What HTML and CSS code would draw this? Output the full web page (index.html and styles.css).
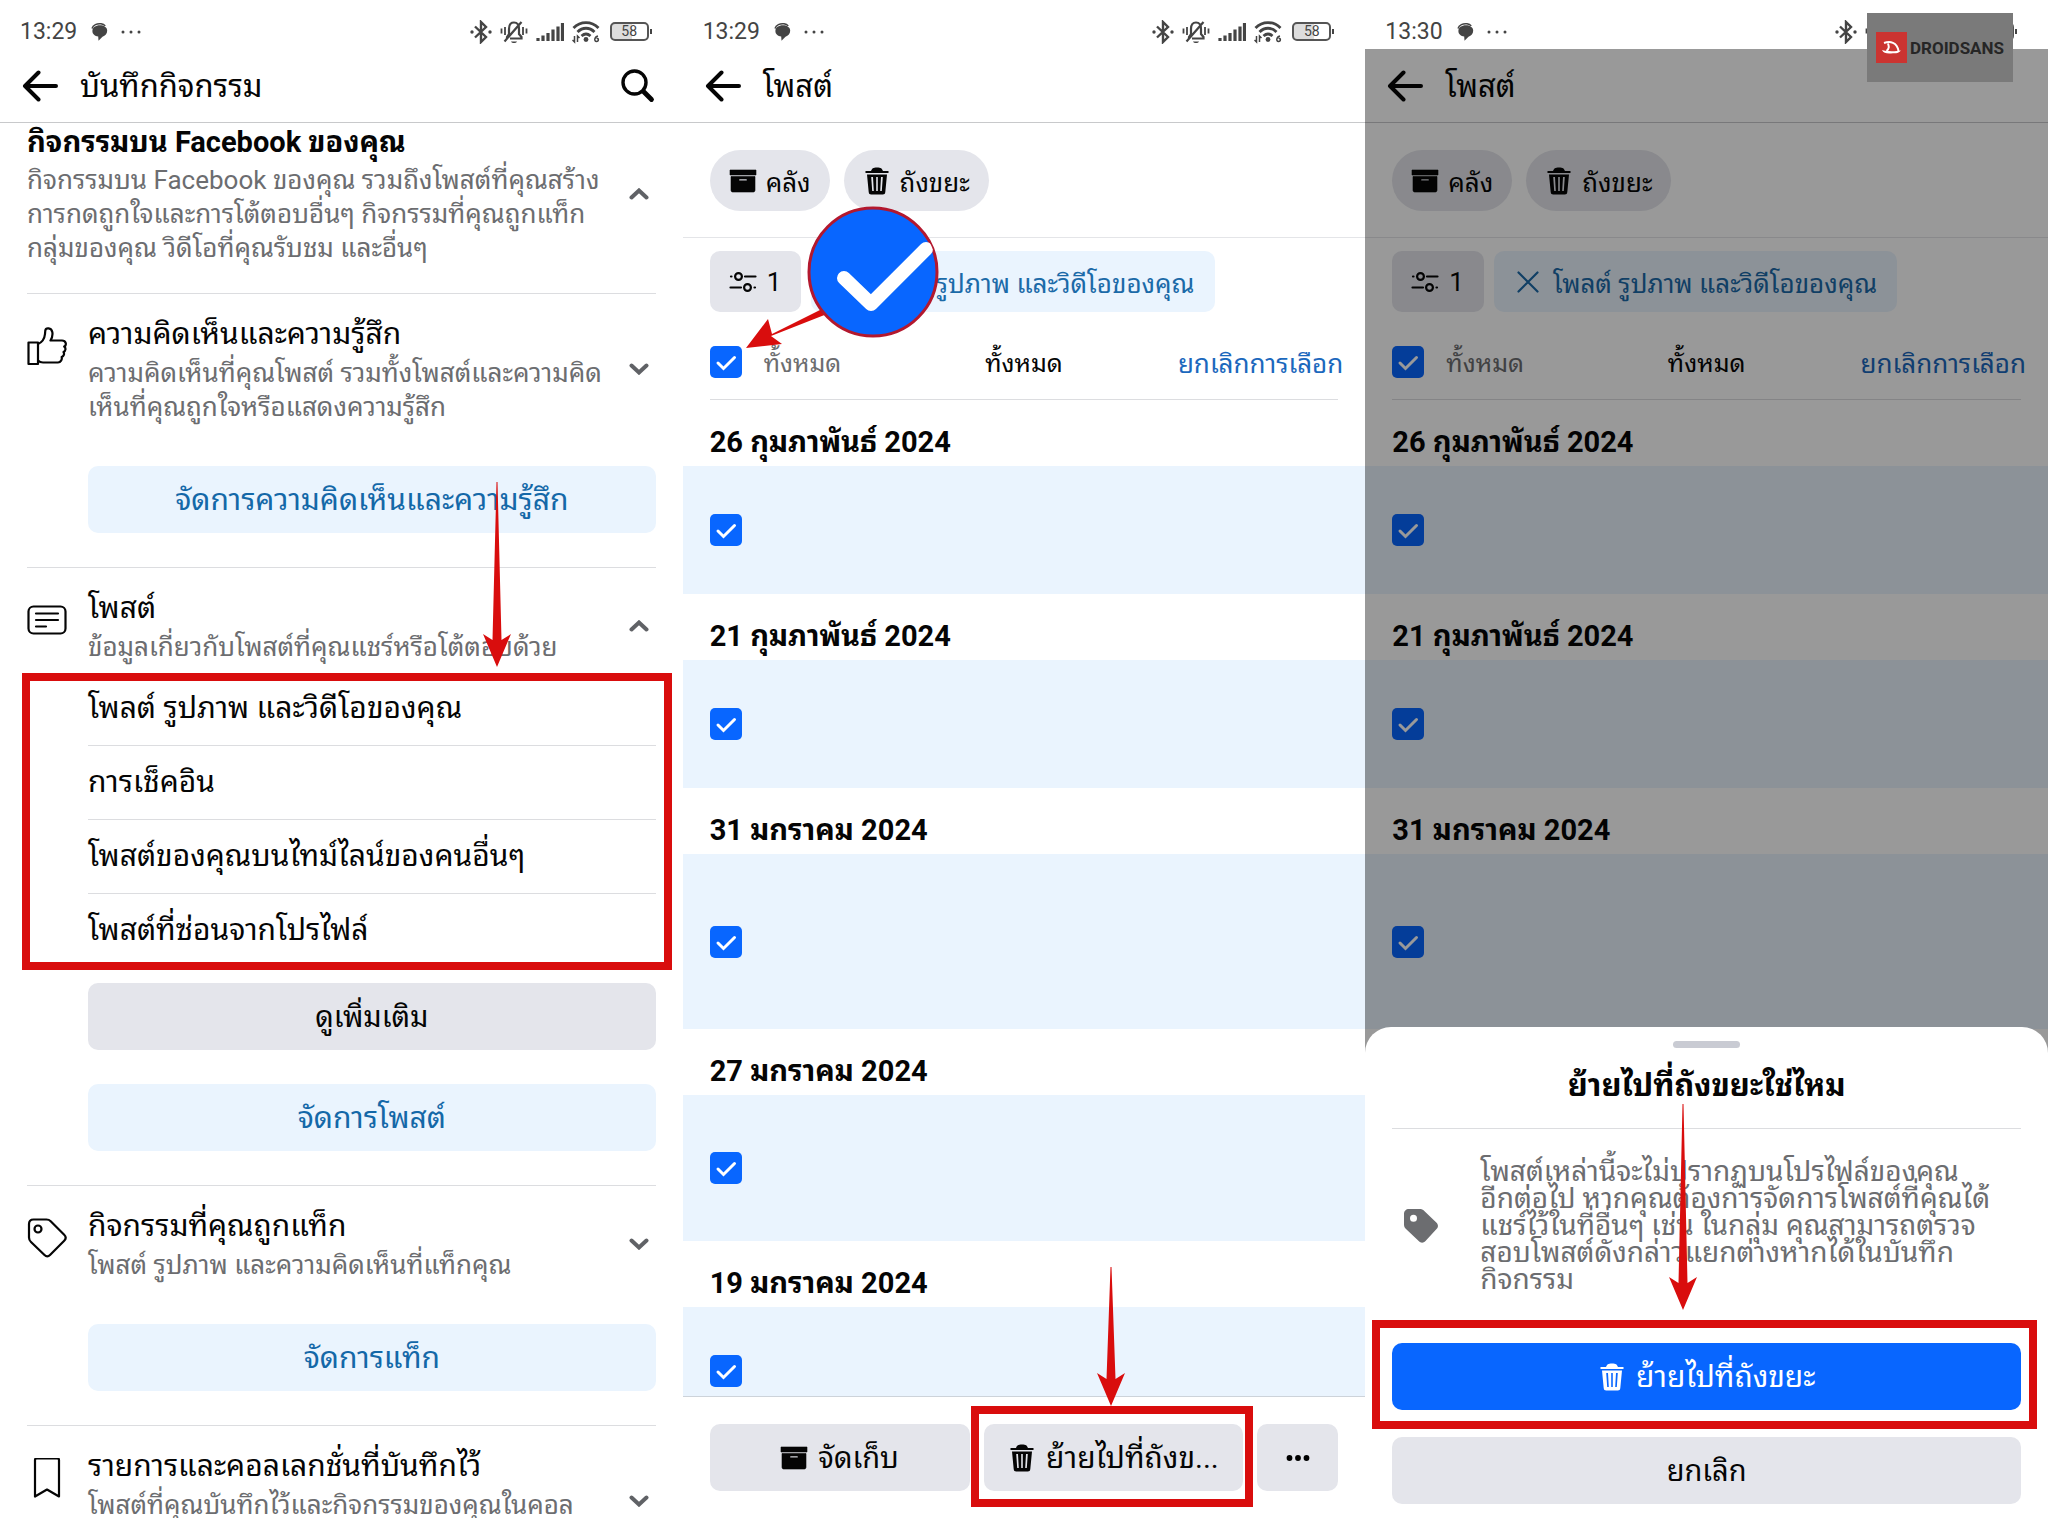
FILE: index.html
```html
<!DOCTYPE html>
<html lang="th">
<head>
<meta charset="utf-8">
<meta name="viewport" content="width=device-width, initial-scale=1">
<title>บันทึกกิจกรรม</title>
<link rel="stylesheet" href="styles.css">
</head>
<body>
<svg class="sprite" aria-hidden="true">
  <symbol id="i-chat" viewBox="0 0 18 18"><path d="M2 5.500C3 2 7 .3 11 .8c1.800.3 3.300 1 4.300 2.100" fill="none" stroke="currentColor" stroke-width="1.400"/><path d="M9.800 2.300c4 0 7.400 2 7.400 5.400 0 3-2 5-4.700 6L8.500 17.800l-.3-4.300C5 13 2.400 11.200 2.400 8c0-3.500 3.400-5.700 7.400-5.700z" fill="currentColor"/></symbol>
  <symbol id="i-bt" viewBox="0 0 22 24"><path d="M5 6.500l11 10.500-5 5V2l5 5L5 17.500" fill="none" stroke="currentColor" stroke-width="2.400"/><circle cx="2" cy="12" r="1.700" fill="currentColor"/><circle cx="20" cy="12" r="1.700" fill="currentColor"/></symbol>
  <symbol id="i-bell" viewBox="0 0 28 24"><path d="M7 18.500V17l2-3V9c0-4 2-6.500 5-6.500S19 5 19 9v5l2.500 3v1.500H10M4.500 21.500L21.500 2" fill="none" stroke="currentColor" stroke-width="2.200"/><path d="M11 21.500h6c-1 2-5 2-6 0z" fill="currentColor"/><path d="M1.500 8.500v5M5 7v8M23 7v8M26.500 8.500v5" stroke="currentColor" stroke-width="1.800"/></symbol>
  <symbol id="i-signal" viewBox="0 0 28 20"><path d="M2 16v3M7 13.500V19M12 11v8M17 7.500V19M22 4.500V19M26.500 1v18" stroke="currentColor" stroke-width="3.200"/></symbol>
  <symbol id="i-wifi" viewBox="0 0 28 24"><path d="M1.500 8C8.500.8 19.500.8 26.500 8M5.500 12c5-5 12-5 17 0M9.500 16c3-2.700 6-2.700 9 0" fill="none" stroke="currentColor" stroke-width="2.800"/><circle cx="14" cy="19.500" r="2.400" fill="currentColor"/><path d="M2.500 16v6l-2-2M5.500 22v-6l2 2M26 16c-4 1-4 5.500-1.500 5.500 2.500 0 2.500-3.300 0-3.300" fill="none" stroke="currentColor" stroke-width="1.500"/></symbol>
  <symbol id="i-back" viewBox="0 0 36 32"><path d="M34 16H3.500M16.500 2.500L3 16l13.500 13.500" fill="none" stroke="currentColor" stroke-width="4" stroke-linecap="round" stroke-linejoin="round"/></symbol>
  <symbol id="i-search" viewBox="0 0 34 34"><circle cx="13.500" cy="13.500" r="11.500" fill="none" stroke="currentColor" stroke-width="3.400"/><path d="M22.500 22.500l8 8" stroke="currentColor" stroke-width="4.800" stroke-linecap="round"/></symbol>
  <symbol id="i-down" viewBox="0 0 20 12"><path d="M2.500 2.500L10 9.500l7.500-7" fill="none" stroke="currentColor" stroke-width="4" stroke-linecap="round"/></symbol>
  <symbol id="i-up" viewBox="0 0 20 12"><path d="M2.500 9.500L10 2.500l7.500 7" fill="none" stroke="currentColor" stroke-width="4" stroke-linecap="round"/></symbol>
  <symbol id="i-like" viewBox="0 0 40 40"><g fill="none" stroke="currentColor" stroke-width="2.200" stroke-linejoin="round"><path d="M1.500 16.500h9.500v21.500H1.500z"/><path d="M11 18c3.500-1.500 6.500-5 7-10l.3-3.500c.5-3 6-3 7 1.500.6 3-.3 6-1.800 8.500H35c4 0 5 4.500 2.200 6 2 1.500 1.600 4.500-.7 5.500 1.200 2 .3 4.300-1.800 5 .6 2.500-1 5.500-3.700 5.500H16c-2 0-3.500-.5-5-2"/></g></symbol>
  <symbol id="i-post" viewBox="0 0 40 40"><rect x="1.500" y="6.500" width="37" height="27" rx="5" fill="none" stroke="currentColor" stroke-width="2.200"/><path d="M9 13.500h22M9 20h22M9 26.500h10" stroke="currentColor" stroke-width="2.200" stroke-linecap="round"/></symbol>
  <symbol id="i-tag" viewBox="0 0 40 40"><path d="M2 6c0-3 1.500-4.500 4.500-4.500h13c2 0 3 .5 4.200 1.700l13.500 13.500c2 2 2 4 0 6L23 37c-2 2-3.500 2-5.500 0L4 24c-1.300-1.200-2-2.500-2-4.500z" fill="none" stroke="currentColor" stroke-width="2.200"/><circle cx="11" cy="11" r="3.500" fill="none" stroke="currentColor" stroke-width="2.200"/></symbol>
  <symbol id="i-tagfill" viewBox="0 0 34 34"><path fill-rule="evenodd" d="M0 5c0-3 2-5 5-5h10.500c2 0 3.500.6 4.800 2l12 11.500c2.200 2.200 2.200 4.600 0 6.700L21.500 32c-2.200 2.300-4.600 2.300-6.800 0L2 20c-1.400-1.400-2-2.600-2-4.600zM9.500 5.800a3.500 3.500 0 1 0 0 7 3.500 3.500 0 0 0 0-7z" fill="currentColor"/></symbol>
  <symbol id="i-mark" viewBox="0 0 40 40"><path d="M8 2c0-1 .5-1.500 1.500-1.500h21c1 0 1.500.5 1.500 1.500v36.500l-12-7-12 7z" fill="none" stroke="currentColor" stroke-width="2.200" stroke-linejoin="round"/></symbol>
  <symbol id="i-archive" viewBox="0 0 28 28"><path fill-rule="evenodd" d="M1 3h26v5h-26zM2 9.500h24V23c0 1.500-.7 2-2 2H4c-1.300 0-2-.5-2-2zm8 2.500v1.800h8V12z" fill="currentColor" stroke="currentColor" stroke-width=".6" stroke-linejoin="round"/></symbol>
  <symbol id="i-trash" viewBox="0 0 28 28"><path d="M2.500 4H8c1-2.500 2-3.500 6-3.500s5 1 6 3.500h5.500v2h-23z" fill="currentColor"/><path fill-rule="evenodd" d="M4 7.500h20L22.300 25c-.2 1.800-1 2.500-2.500 2.500H8.200c-1.500 0-2.300-.7-2.500-2.500zM8.200 10l1 14h1.600l-.8-14zM13.200 10v14h1.600V10zM18 10l-.8 14h1.600l1-14z" fill="currentColor"/></symbol>
  <symbol id="i-filter" viewBox="0 0 28 28"><g fill="none" stroke="currentColor" stroke-width="2.200" stroke-linecap="round"><circle cx="9.500" cy="8.500" r="3.400"/><circle cx="18.500" cy="19.500" r="3.400"/><path d="M2 8.500h.5M16 8.500h10.500M1.500 19.500H12M25.500 19.500h.5"/></g></symbol>
  <symbol id="i-x" viewBox="0 0 22 22"><path d="M1.500 1.500l19 19M20.500 1.500l-19 19" stroke="currentColor" stroke-width="2.200" stroke-linecap="round"/></symbol>
  <symbol id="i-dots" viewBox="0 0 24 8"><circle cx="3.500" cy="4" r="2.900"/><circle cx="12" cy="4" r="2.900"/><circle cx="20.500" cy="4" r="2.900"/></symbol>
  <symbol id="i-sdots" viewBox="0 0 20 4"><g fill="currentColor"><circle cx="2" cy="2" r="1.500"/><circle cx="10" cy="2" r="1.500"/><circle cx="18" cy="2" r="1.500"/></g></symbol>
</svg>

<main class="screens">

  <section class="screen">
    <div class="status">
      <span>13:29</span>
      <svg class="s-chat"><use href="#i-chat"/></svg>
      <svg class="s-dots"><use href="#i-sdots"/></svg>
      <div class="status-right">
        <svg class="s-bt"><use href="#i-bt"/></svg>
        <svg class="s-bell"><use href="#i-bell"/></svg>
        <svg class="s-signal"><use href="#i-signal"/></svg>
        <svg class="s-wifi"><use href="#i-wifi"/></svg>
        <span class="battery">58</span>
      </div>
    </div>
    <header class="bar">
      <button class="icon-btn" aria-label="กลับ"><svg class="back"><use href="#i-back"/></svg></button>
      <h1>บันทึกกิจกรรม</h1>
      <button class="icon-btn bar-end" aria-label="ค้นหา"><svg class="search"><use href="#i-search"/></svg></button>
    </header>

    <div class="log">
      <div class="intro">
        <div class="copy">
          <h2 class="strong">กิจกรรมบน Facebook ของคุณ</h2>
          <p>กิจกรรมบน Facebook ของคุณ รวมถึงโพสต์ที่คุณสร้าง<br>การกดถูกใจและการโต้ตอบอื่นๆ กิจกรรมที่คุณถูกแท็ก<br>กลุ่มของคุณ วิดีโอที่คุณรับชม และอื่นๆ</p>
        </div>
        <svg class="chev"><use href="#i-up"/></svg>
      </div>

      <article class="entry">
        <div class="entry-head">
          <svg class="entry-icon"><use href="#i-like"/></svg>
          <div class="copy">
            <h2>ความคิดเห็นและความรู้สึก</h2>
            <p>ความคิดเห็นที่คุณโพสต์ รวมทั้งโพสต์และความคิด<br>เห็นที่คุณถูกใจหรือแสดงความรู้สึก</p>
          </div>
          <svg class="chev"><use href="#i-down"/></svg>
        </div>
        <div class="entry-body spaced">
          <button class="btn tint">จัดการความคิดเห็นและความรู้สึก</button>
        </div>
      </article>

      <article class="entry">
        <div class="entry-head">
          <svg class="entry-icon"><use href="#i-post"/></svg>
          <div class="copy">
            <h2>โพสต์</h2>
            <p>ข้อมูลเกี่ยวกับโพสต์ที่คุณแชร์หรือโต้ตอบด้วย</p>
          </div>
          <svg class="chev"><use href="#i-up"/></svg>
        </div>
        <div class="entry-body listed">
          <div class="target">
            <ul class="links">
              <li><a href="#">โพลต์ รูปภาพ และวิดีโอของคุณ</a></li>
              <li><a href="#">การเช็คอิน</a></li>
              <li><a href="#">โพสต์ของคุณบนไทม์ไลน์ของคนอื่นๆ</a></li>
              <li><a href="#">โพสต์ที่ซ่อนจากโปรไฟล์</a></li>
            </ul>
            <span class="frame frame-list"></span>
            <svg class="arrow arrow-list" viewBox="0 0 28 185"><path d="M13.500 0h1l4 158 9.500-6-14 33-14-33 9.500 6z"/></svg>
          </div>
          <button class="btn plain">ดูเพิ่มเติม</button>
          <button class="btn tint after-gap">จัดการโพสต์</button>
        </div>
      </article>

      <article class="entry">
        <div class="entry-head">
          <svg class="entry-icon"><use href="#i-tag"/></svg>
          <div class="copy">
            <h2>กิจกรรมที่คุณถูกแท็ก</h2>
            <p>โพสต์ รูปภาพ และความคิดเห็นที่แท็กคุณ</p>
          </div>
          <svg class="chev"><use href="#i-down"/></svg>
        </div>
        <div class="entry-body spaced">
          <button class="btn tint">จัดการแท็ก</button>
        </div>
      </article>

      <article class="entry">
        <div class="entry-head">
          <svg class="entry-icon"><use href="#i-mark"/></svg>
          <div class="copy two-line">
            <h2>รายการและคอลเลกชั่นที่บันทึกไว้</h2>
            <p>โพสต์ที่คุณบันทึกไว้และกิจกรรมของคุณในคอล</p>
          </div>
          <svg class="chev"><use href="#i-down"/></svg>
        </div>
      </article>
    </div>
  </section>

  <section class="screen">
    <div class="status">
      <span>13:29</span>
      <svg class="s-chat"><use href="#i-chat"/></svg>
      <svg class="s-dots"><use href="#i-sdots"/></svg>
      <div class="status-right">
        <svg class="s-bt"><use href="#i-bt"/></svg>
        <svg class="s-bell"><use href="#i-bell"/></svg>
        <svg class="s-signal"><use href="#i-signal"/></svg>
        <svg class="s-wifi"><use href="#i-wifi"/></svg>
        <span class="battery">58</span>
      </div>
    </div>
    <header class="bar">
      <button class="icon-btn" aria-label="กลับ"><svg class="back"><use href="#i-back"/></svg></button>
      <h1>โพสต์</h1>
    </header>
    <div class="posts">
      <div class="pills">
        <button class="pill"><svg class="glyph"><use href="#i-archive"/></svg><span class="label">คลัง</span></button>
        <button class="pill"><svg class="glyph"><use href="#i-trash"/></svg><span class="label">ถังขยะ</span></button>
      </div>
      <div class="filters">
        <button class="chip"><svg class="glyph"><use href="#i-filter"/></svg>1</button>
        <button class="chip chip-on"><svg class="close"><use href="#i-x"/></svg><span class="label">โพลต์ รูปภาพ และวิดีโอของคุณ</span></button>
        <svg class="lens" viewBox="0 0 194 146"><path class="red" d="M78 102L26 128l-4-15L0 142l36-4-11-8 56-22z"/><clipPath id="lens-clip"><circle cx="127" cy="66" r="64"/></clipPath><circle class="lens-disc" cx="127" cy="66" r="64"/><path class="lens-tick" clip-path="url(#lens-clip)" d="M98 72l27 26 55-55"/></svg>
      </div>
      <div class="select-row">
        <label class="all"><input type="checkbox" checked><span class="label">ทั้งหมด</span></label>
        <span class="label count">ทั้งหมด</span>
        <a class="label" href="#">ยกเลิกการเลือก</a>
      </div>
      <h2 class="day">26 กุมภาพันธ์ 2024</h2>
      <div class="item"><input type="checkbox" checked aria-label="26 กุมภาพันธ์ 2024"></div>
      <h2 class="day">21 กุมภาพันธ์ 2024</h2>
      <div class="item"><input type="checkbox" checked aria-label="21 กุมภาพันธ์ 2024"></div>
      <h2 class="day">31 มกราคม 2024</h2>
      <div class="item item-l"><input type="checkbox" checked aria-label="31 มกราคม 2024"></div>
      <h2 class="day">27 มกราคม 2024</h2>
      <div class="item item-m"><input type="checkbox" checked aria-label="27 มกราคม 2024"></div>
      <h2 class="day">19 มกราคม 2024</h2>
      <div class="item"><input type="checkbox" checked aria-label="19 มกราคม 2024"></div>
    </div>
    <footer class="actions">
      <button class="btn plain grow"><svg class="glyph"><use href="#i-archive"/></svg>จัดเก็บ</button>
      <div class="target grow">
        <button class="btn"><svg class="glyph"><use href="#i-trash"/></svg>ย้ายไปที่ถังข...</button>
        <span class="frame frame-action"></span>
        <svg class="arrow arrow-action" viewBox="0 0 28 139"><path d="M13.500 0h1l4 112 9.500-6-14 33-14-33 9.500 6z"/></svg>
      </div>
      <button class="btn more" aria-label="เพิ่มเติม"><svg class="dots"><use href="#i-dots"/></svg></button>
    </footer>
  </section>

  <section class="screen">
    <div class="status">
      <span>13:30</span>
      <svg class="s-chat"><use href="#i-chat"/></svg>
      <svg class="s-dots"><use href="#i-sdots"/></svg>
      <div class="status-right">
        <svg class="s-bt"><use href="#i-bt"/></svg>
        <svg class="s-bell"><use href="#i-bell"/></svg>
        <svg class="s-signal"><use href="#i-signal"/></svg>
        <svg class="s-wifi"><use href="#i-wifi"/></svg>
        <span class="battery"></span>
      </div>
    </div>
    <div class="dimmed">
      <header class="bar">
        <button class="icon-btn" aria-label="กลับ"><svg class="back"><use href="#i-back"/></svg></button>
        <h1>โพสต์</h1>
      </header>
      <div class="posts">
        <div class="pills">
          <button class="pill"><svg class="glyph"><use href="#i-archive"/></svg><span class="label">คลัง</span></button>
          <button class="pill"><svg class="glyph"><use href="#i-trash"/></svg><span class="label">ถังขยะ</span></button>
        </div>
        <div class="filters">
          <button class="chip"><svg class="glyph"><use href="#i-filter"/></svg>1</button>
          <button class="chip chip-on"><svg class="close"><use href="#i-x"/></svg><span class="label">โพลต์ รูปภาพ และวิดีโอของคุณ</span></button>
        </div>
        <div class="select-row">
          <label class="all"><input type="checkbox" checked><span class="label">ทั้งหมด</span></label>
          <span class="label count">ทั้งหมด</span>
          <a class="label" href="#">ยกเลิกการเลือก</a>
        </div>
        <h2 class="day">26 กุมภาพันธ์ 2024</h2>
        <div class="item"><input type="checkbox" checked aria-label="26 กุมภาพันธ์ 2024"></div>
        <h2 class="day">21 กุมภาพันธ์ 2024</h2>
        <div class="item"><input type="checkbox" checked aria-label="21 กุมภาพันธ์ 2024"></div>
        <h2 class="day">31 มกราคม 2024</h2>
        <div class="item item-l"><input type="checkbox" checked aria-label="31 มกราคม 2024"></div>
      </div>
    </div>
    <div class="sheet" role="dialog" aria-labelledby="sheet-title">
      <span class="handle"></span>
      <h2 id="sheet-title">ย้ายไปที่ถังขยะใช่ไหม</h2>
      <div class="notice">
        <svg class="notice-icon"><use href="#i-tagfill"/></svg>
        <p>โพสต์เหล่านี้จะไม่ปรากฏบนโปรไฟล์ของคุณ<br>อีกต่อไป หากคุณต้องการจัดการโพสต์ที่คุณได้<br>แชร์ไว้ในที่อื่นๆ เช่น ในกลุ่ม คุณสามารถตรวจ<br>สอบโพสต์ดังกล่าวแยกต่างหากได้ในบันทึก<br>กิจกรรม</p>
      </div>
      <div class="target">
        <button class="btn primary"><svg class="glyph"><use href="#i-trash"/></svg>ย้ายไปที่ถังขยะ</button>
        <span class="frame frame-sheet"></span>
        <svg class="arrow arrow-sheet" viewBox="0 0 28 206"><path d="M13.500 0h1l4 179 9.500-6-14 33-14-33 9.500 6z"/></svg>
      </div>
      <button class="btn plain">ยกเลิก</button>
    </div>
    <div class="brand">
      <svg class="brand-mark" viewBox="0 0 31 31"><path fill="#cb3431" d="M0 0h31v31H0z"/><path d="M8 11c6-2 13-1 14.500 8M12 11.500c1 3 1.500 5-1.500 7.500" fill="none" stroke="#fff" stroke-width="2"/><path d="M6 18c4 1.500 13 1.500 19 .5-2 2.500-5 3-8 2.700-5 .8-9.500.3-11-3.200z" fill="#fff"/></svg>
      <span>DROIDSANS</span>
    </div>
  </section>

</main>
</body>
</html>
```
FILE: styles.css
```css
*{box-sizing:border-box}
body{margin:0;background:#fff;color:#050505;font-family:Roboto,"Noto Sans Thai Looped","Noto Sans Thai",sans-serif;font-size:26px;line-height:34px}
h1,h2,p,ul{margin:0;padding:0}
h1,h2{font-size:30px;font-weight:400;line-height:40px}
button{font:inherit;color:inherit;border:0;background:none;padding:0;cursor:pointer}
a{color:inherit;text-decoration:none}
svg{display:block;flex:none}
.sprite{display:none}

.screens{display:grid;grid-template-columns:repeat(3,minmax(0,1fr));height:100vh}
.screen{position:relative;display:flex;flex-direction:column;overflow:hidden;background:#fff}

/* status bar */
.status{display:flex;align-items:center;flex:none;height:49px;padding:14px 31px 0 20px;color:#444;font-size:23px}
.s-chat{width:18px;height:18px;margin-left:13px}
.s-dots{width:20px;height:4px;margin-left:13px}
.status-right{display:flex;align-items:center;gap:8px;margin-left:auto}
.s-bt{width:22px;height:24px}
.s-bell{width:28px;height:24px}
.s-signal{width:28px;height:20px}
.s-wifi{width:28px;height:24px}
.battery{position:relative;width:39px;height:19px;margin:0 3px 0 2px;border:2px solid #555;border-radius:5px;background:linear-gradient(90deg,#ddd 58%,#fff 58%);font-size:14px;line-height:15px;text-align:center}
.battery::after{content:"";position:absolute;right:-5px;top:5px;width:2px;height:5px;background:#444}

/* title bar */
.bar{display:flex;align-items:center;flex:none;height:74px;padding:0 28px 0 22px;border-bottom:1px solid #c8c9cb}
.back{width:36px;height:32px}
.search{width:34px;height:34px}
.bar h1{margin-left:22px;padding-top:2px;font-size:31px}
.bar-end{margin-left:auto}

/* activity log */
.log{padding:0 27px}
.intro{display:flex;align-items:center;padding-bottom:28px}
.copy{flex:1;min-width:0;white-space:nowrap}
.copy p{margin-top:2px;color:#6c6d70}
.strong{font-size:29px;font-weight:700;line-height:38px}
.two-line p{min-height:68px}
.chev{width:20px;height:12px;margin-right:7px;color:#606266}
.entry{border-top:1px solid #dcdde0}
.entry-head{display:flex;align-items:center;padding-top:20px}
.entry-icon{width:40px;height:40px;margin:12px 21px 0 0;align-self:flex-start}
.entry-body{display:flex;flex-direction:column;padding:0 0 34px 61px}
.spaced{padding-top:42px}
.listed{padding-top:8px}
.listed .target{margin-bottom:16px}
.links{list-style:none;font-size:30px}
.links li+li{border-top:1px solid #dcdde0}
.links a{display:block;padding:16px 0 17px;line-height:40px}
.after-gap{margin-top:34px}

.btn{display:flex;align-items:center;justify-content:center;gap:10px;width:100%;height:67px;border-radius:10px;background:#e4e5eb;font-size:30px;line-height:40px;white-space:nowrap}
.plain{font-size:29px}
.tint{background:#eaf4fe;color:#1468a8}
.primary{background:#0866ff;color:#fff}
.glyph{width:28px;height:28px}

/* posts */
.posts{flex:1;min-height:0;overflow:hidden}
.pills{display:flex;gap:14px;padding:27px 27px 26px;border-bottom:1px solid #e4e5e8}
.pill,.chip{display:flex;align-items:center;height:61px;background:#e4e5eb;white-space:nowrap}
.label{padding-top:4px}
.pill{gap:9px;padding:0 19px;border-radius:31px}
.filters{position:relative;display:flex;gap:10px;padding:13px 27px}
.chip{gap:10px;padding:0 20px 0 19px;border-radius:10px}
.chip-on{gap:14px;padding-left:23px;background:#eaf4fe;color:#1b6aa8}
.close{width:22px;height:22px}
.select-row{display:grid;grid-template-columns:1fr auto 1fr;align-items:center;height:75px;margin:0 27px;border-bottom:1px solid #dcdde0}
.select-row a{justify-self:end;margin-right:-5px;color:#1b68bd}
.all{display:flex;align-items:center;gap:22px;color:#6c6d70}
.all,.count{font-size:25px}
input[type=checkbox]{appearance:none;flex:none;width:32px;height:32px;margin:0;border-radius:5px;background:#0866ff url("data:image/svg+xml,%3Csvg xmlns='http://www.w3.org/2000/svg' viewBox='0 0 32 32'%3E%3Cpath d='M8 17l5.500 5.500L24.500 11.500' fill='none' stroke='%23fff' stroke-width='3' stroke-linecap='round'/%3E%3C/svg%3E") center/100%}
.day{padding:22px 27px 4px;font-size:29px;font-weight:700}
.item{display:flex;align-items:center;height:128px;padding:0 27px;background:#eaf4fe}
.item-l{height:175px}
.item-m{height:146px}
.actions{display:flex;gap:14px;flex:none;padding:27px;border-top:1px solid #cdd3da;background:#fff}
.grow{flex:1 1 0;min-width:0}
.more{width:81px;flex:none}
.dots{width:24px;height:8px}

/* confirmation sheet */
.dimmed{position:relative;flex:1;min-height:0;overflow:hidden}
.dimmed::after{content:"";position:absolute;inset:0;background:rgba(0,0,0,.4)}
.sheet{position:absolute;left:0;right:0;bottom:0;display:flex;flex-direction:column;padding:14px 27px;border-radius:26px 26px 0 0;background:#fff}
.handle{align-self:center;width:67px;height:7px;border-radius:4px;background:#c9cbd3}
.sheet h2{padding:18px 0 22px;border-bottom:1px solid #dcdde0;font-size:31px;font-weight:700;text-align:center}
.notice{display:flex;align-items:center;gap:42px;padding:29px 0 50px 12px;color:#6c6d70;font-size:28px}
.notice-icon{width:34px;height:34px}
.notice p{line-height:27px;white-space:nowrap}
.sheet .target{margin-bottom:27px}

/* callouts */
.target{position:relative}
.frame{position:absolute;border:8px solid #d90d0d;pointer-events:none}
.frame-list{top:1px;right:-16px;bottom:-3px;left:-66px}
.frame-action{top:-18px;right:-10px;bottom:-16px;left:-13px}
.frame-sheet{top:-23px;right:-16px;bottom:-19px;left:-20px}
.arrow{position:absolute;width:28px;fill:#d90d0d}
.arrow-list{right:145px;bottom:calc(100% + 5px)}
.arrow-action{left:calc(50% - 16px);bottom:calc(100% + 18px)}
.arrow-sheet{left:calc(50% - 38px);bottom:calc(100% + 33px)}
.actions,.target{z-index:1}
.lens{position:absolute;left:63px;top:-32px;width:194px;height:146px}
.red{fill:#d90d0d}
.lens-disc{fill:#0866ff;stroke:#b3182e;stroke-width:3}
.lens-tick{fill:none;stroke:#fff;stroke-width:14;stroke-linecap:round;stroke-linejoin:round}

.brand{position:absolute;top:13px;right:35px;display:flex;align-items:center;gap:3px;height:69px;padding:0 9px;background:#7a7a7a;color:#262626;font-size:17px;font-weight:700}
.brand-mark{width:31px;height:31px}
```
